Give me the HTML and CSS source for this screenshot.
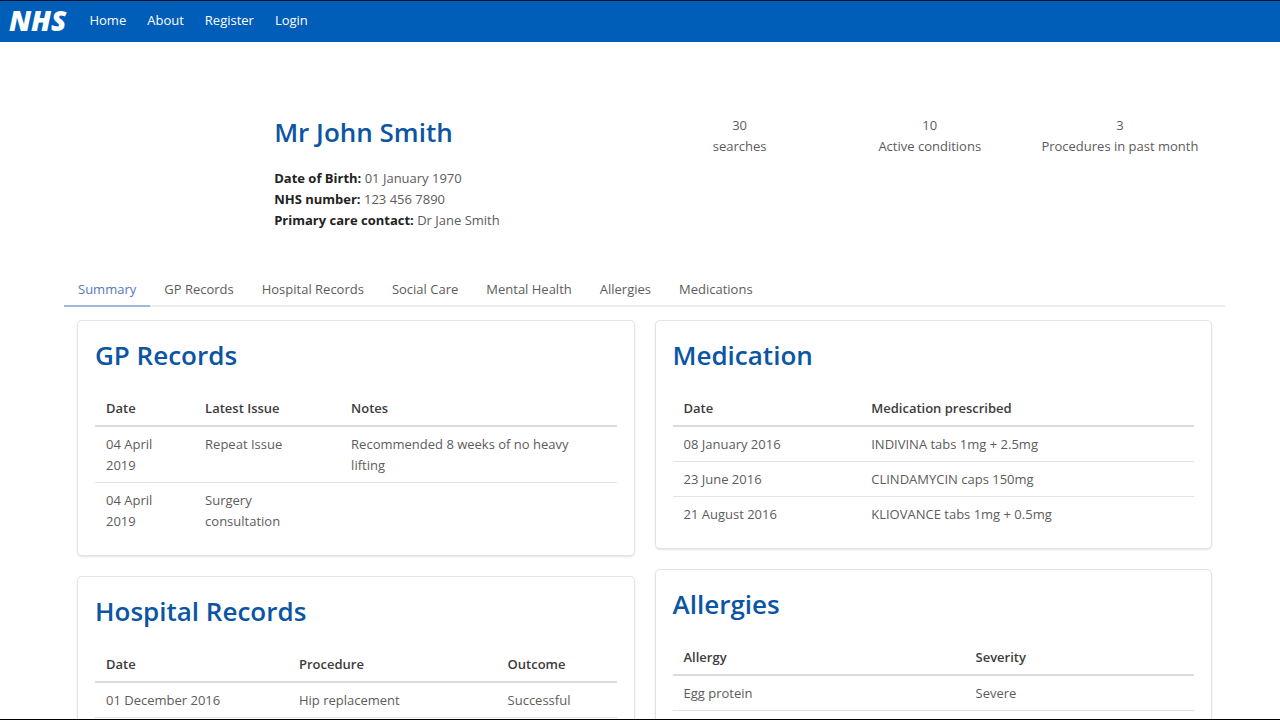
FILE: index.html
```html
<!DOCTYPE html>
<html lang="en">
<head>
    <meta charset="UTF-8">
    <meta name="viewport" content="width=device-width, initial-scale=1.0">
    <title>Patient Record</title>
    <link rel="stylesheet" href="styles.css">
</head>
<body>
    <div class="page">
        <nav class="navbar">
            <a class="logo" href="#">NHS</a>
            <a href="#">Home</a>
            <a href="#">About</a>
            <a href="#">Register</a>
            <a href="#">Login</a>
        </nav>

        <main class="container">
            <section class="profile">
                <div class="details">
                    <h1>Mr John Smith</h1>
                    <p><b>Date of Birth:</b> 01 January 1970</p>
                    <p><b>NHS number:</b> 123 456 7890</p>
                    <p><b>Primary care contact:</b> Dr Jane Smith</p>
                </div>
                <div class="stat">
                    <p>30</p>
                    <p>searches</p>
                </div>
                <div class="stat">
                    <p>10</p>
                    <p>Active conditions</p>
                </div>
                <div class="stat">
                    <p>3</p>
                    <p>Procedures in past month</p>
                </div>
            </section>

            <nav class="tabs">
                <a class="active" href="#">Summary</a>
                <a href="#">GP Records</a>
                <a href="#">Hospital Records</a>
                <a href="#">Social Care</a>
                <a href="#">Mental Health</a>
                <a href="#">Allergies</a>
                <a href="#">Medications</a>
            </nav>

            <div class="columns">
                <div class="column">
                    <section class="card">
                        <h2>GP Records</h2>
                        <table class="gp">
                            <thead>
                                <tr><th>Date</th><th>Latest Issue</th><th>Notes</th></tr>
                            </thead>
                            <tbody>
                                <tr><td>04 April 2019</td><td>Repeat Issue</td><td>Recommended 8 weeks of no heavy lifting</td></tr>
                                <tr><td>04 April 2019</td><td>Surgery consultation</td><td></td></tr>
                            </tbody>
                        </table>
                    </section>
                    <section class="card">
                        <h2>Hospital Records</h2>
                        <table class="hospital">
                            <thead>
                                <tr><th>Date</th><th>Procedure</th><th>Outcome</th></tr>
                            </thead>
                            <tbody>
                                <tr><td>01 December 2016</td><td>Hip replacement</td><td>Successful</td></tr>
                            </tbody>
                        </table>
                    </section>
                </div>
                <div class="column">
                    <section class="card">
                        <h2>Medication</h2>
                        <table class="medication">
                            <thead>
                                <tr><th>Date</th><th>Medication prescribed</th></tr>
                            </thead>
                            <tbody>
                                <tr><td>08 January 2016</td><td>INDIVINA tabs 1mg + 2.5mg</td></tr>
                                <tr><td>23 June 2016</td><td>CLINDAMYCIN caps 150mg</td></tr>
                                <tr><td>21 August 2016</td><td>KLIOVANCE tabs 1mg + 0.5mg</td></tr>
                            </tbody>
                        </table>
                    </section>
                    <section class="card">
                        <h2>Allergies</h2>
                        <table class="allergies">
                            <thead>
                                <tr><th>Allergy</th><th>Severity</th></tr>
                            </thead>
                            <tbody>
                                <tr><td>Egg protein</td><td>Severe</td></tr>
                            </tbody>
                        </table>
                    </section>
                </div>
            </div>
        </main>
    </div>
</body>
</html>
```

FILE: styles.css
```css
*{
    box-sizing: border-box;
}

body{
    margin: 0;
    font-family: "Open Sans", "Noto Sans", sans-serif;
    font-size: 13px;
    line-height: 21px;
    color: #5c5c5c;
    background-color: white;
}

a{
    color: inherit;
    text-decoration: none;
}

h1, h2, p{
    margin: 0;
}

h1, h2{
    font-size: 26px;
    line-height: 36px;
    font-weight: 600;
    color: #0b55a3;
}

/* dark edge above and below the whole page */
.page{
    height: 100vh;
    overflow-y: auto;
    scrollbar-width: none;
    border-top: 1px solid #03102b;
    border-bottom: 1px solid black;
}

.navbar{
    display: flex;
    align-items: center;
    gap: 21px;
    height: 41px;
    padding: 0 9px 2px;
    background-color: #005eb8;
    color: white;
}

.logo{
    margin-right: 2px;
    font-size: 28px;
    font-weight: 800;
    font-style: italic;
}

.container{
    padding: 72px 55px 20px 64px;
}

.profile{
    display: grid;
    grid-template-columns: repeat(6, 1fr);
    padding: 0 10px;
}

.details{
    grid-column: 2 / span 2;
    padding-left: 10px;
}

.details h1{
    margin-bottom: 18px;
}

.details b{
    font-weight: 700;
    color: #222;
}

.stat{
    text-align: center;
    white-space: nowrap;
    padding-top: 1px;
}

.tabs{
    display: flex;
    margin-top: 46px;
    border-bottom: 2px solid #ebecee;
}

.tabs a{
    padding: 2px 14px 5px;
    margin-bottom: -2px;
    border-bottom: 2px solid transparent;
}

.tabs .active{
    color: #5579bb;
    border-color: #9dbbd6;
}

.columns{
    display: grid;
    grid-template-columns: 1fr 1fr;
    gap: 20px;
    padding: 13px;
}

.column{
    display: flex;
    flex-direction: column;
    gap: 20px;
}

.card{
    padding: 16px 17px 17px;
    border: 1px solid #e2e3e5;
    border-radius: 5px;
    box-shadow: 0 1px 2px rgba(0, 0, 0, 0.12);
}

.card h2{
    margin-bottom: 18px;
}

table{
    width: 100%;
    table-layout: fixed;
    border-collapse: collapse;
}

th, td{
    padding: 7px 20px 6px 11px;
    text-align: left;
    vertical-align: top;
}

th{
    font-weight: 600;
    color: #3c3c3c;
    border-bottom: 2px solid #d9dbdd;
}

td{
    border-bottom: 1px solid #e1e3e5;
}

.gp tr:last-child td, .medication tr:last-child td{
    border-bottom: none;
}

.gp th:nth-child(1){
    width: 19%;
}

.gp th:nth-child(2){
    width: 28%;
}

.hospital th:nth-child(1){
    width: 37%;
}

.hospital th:nth-child(2){
    width: 40%;
}

.medication th:nth-child(1){
    width: 36%;
}

.allergies th:nth-child(1){
    width: 56%;
}
```
